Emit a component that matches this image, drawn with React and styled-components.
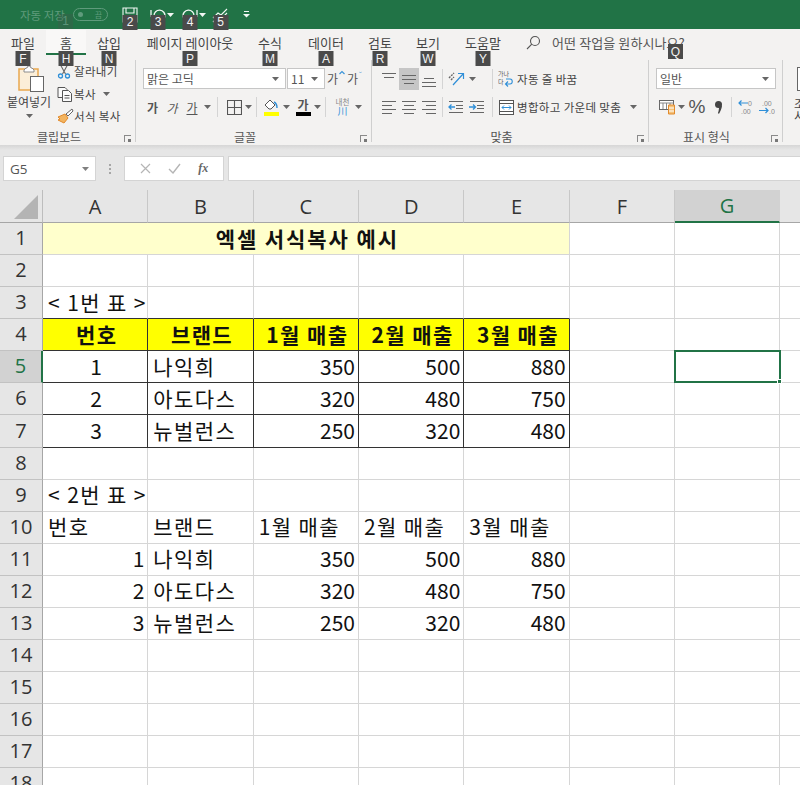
import React from "react";
import styled, { createGlobalStyle, css } from "styled-components";

const KR = `"Noto Sans CJK KR", "Noto Sans", sans-serif`;
const LAT = `"Open Sans", "Noto Sans CJK KR", sans-serif`;
const GREEN = "#217346";
const INK = "#444444";

const Global = createGlobalStyle`
  html, body { margin: 0; padding: 0; background: #fff; overflow: hidden; }
  #root { width: 800px; height: 785px; overflow: hidden; }
`;

const Page = styled.div`
  width: 800px;
  height: 785px;
  overflow: hidden;
  display: flex;
  flex-direction: column;
  font-family: ${KR};
  color: ${INK};
`;

/* ---------- key tips ---------- */
const KeyTip = styled.span`
  position: absolute;
  left: ${(p) => p.$left ?? "50%"};
  top: ${(p) => p.$top}px;
  transform: ${(p) => (p.$left ? "none" : "translateX(-50%)")};
  width: 15px;
  height: 15px;
  display: flex;
  align-items: center;
  justify-content: center;
  background: ${(p) => (p.$dim ? "rgba(70, 85, 78, 0.35)" : "#4a4a4a")};
  color: ${(p) => (p.$dim ? "#5c9479" : "#f4f4f4")};
  font: 12px "Liberation Sans", sans-serif;
  z-index: 5;
`;

/* ---------- title bar ---------- */
const TitleBar = styled.div`
  height: 29px;
  flex: none;
  background: ${GREEN};
  display: flex;
  align-items: center;
  padding-left: 20px;
`;
const AutoSave = styled.span`
  position: relative;
  width: 46px;
  color: #5f9b7c;
  font-size: 11.5px;
  white-space: nowrap;
`;
const Toggle = styled.span`
  width: 35px;
  height: 13px;
  margin-left: 7px;
  box-sizing: border-box;
  border: 1px solid #5f9b7c;
  border-radius: 7px;
  display: flex;
  align-items: center;
  justify-content: space-between;
  padding: 0 5px 0 4px;
  color: #5f9b7c;
  font-size: 8px;
  &::before {
    content: "";
    width: 5px;
    height: 5px;
    border-radius: 50%;
    background: #5f9b7c;
  }
`;
const QatButton = styled.span`
  position: relative;
  display: flex;
  align-items: center;
  justify-content: center;
  width: ${(p) => p.$w}px;
  margin-left: ${(p) => p.$ml || 0}px;
  height: 18px;
`;

/* ---------- tabs ---------- */
const Tabs = styled.div`
  height: 31px;
  flex: none;
  background: #f3f2f1;
  display: flex;
`;
const Tab = styled.div`
  position: relative;
  width: ${(p) => p.$w}px;
  flex: none;
  height: 25px;
  margin-top: 1px;
  padding-top: 3px;
  box-sizing: border-box;
  text-align: center;
  font-size: 13px;
  line-height: 19px;
  white-space: nowrap;
  color: ${INK};
  ${(p) =>
    p.$active &&
    css`
      background: #f9f8f7;
      border-bottom: 2px solid ${GREEN};
    `}
`;
const Search = styled.div`
  position: relative;
  display: flex;
  align-items: center;
  height: 25px;
  margin-top: 1px;
  padding-left: 16px;
  gap: 11px;
  font-size: 13px;
  letter-spacing: 0.1px;
  color: #555;
  white-space: nowrap;
`;

/* ---------- ribbon ---------- */
const Ribbon = styled.div`
  height: 85px;
  flex: none;
  background: #f3f2f1;
  display: flex;
  overflow: hidden;
`;
const Group = styled.section`
  position: relative;
  flex: none;
  width: ${(p) => p.$w}px;
  height: 82px;
  box-sizing: border-box;
  border-right: 1px solid #cfcfcf;
  display: flex;
  flex-direction: column;
`;
const GroupBody = styled.div`
  flex: 1;
  display: flex;
  min-height: 0;
`;
const Stack = styled.div`
  display: flex;
  flex-direction: column;
  padding: ${(p) => p.$pad || "8px 0 0 7px"};
  gap: ${(p) => p.$gap ?? 7}px;
`;
const GroupLabel = styled.div`
  height: 14px;
  flex: none;
  text-align: center;
  font-size: 12px;
  line-height: 18px;
  color: #555;
  padding-right: ${(p) => p.$pr || 0}px;
`;
const Launcher = styled.span`
  position: absolute;
  right: 4px;
  bottom: 0;
  width: 7px;
  height: 7px;
  border-left: 1px solid #8a8a8a;
  border-top: 1px solid #8a8a8a;
  box-sizing: border-box;
  &::after {
    content: "";
    position: absolute;
    right: 0;
    bottom: 0;
    width: 3px;
    height: 3px;
    background: #777;
  }
`;
const PasteButton = styled.div`
  position: relative;
  width: 58px;
  flex: none;
  display: flex;
  flex-direction: column;
  align-items: center;
  padding-top: 6px;
  font-size: 12px;
  color: ${INK};
  box-sizing: border-box;
  span {
    line-height: 16px;
    margin-top: 1px;
  }
  svg:first-child {
    margin-left: 5px;
  }
  svg:last-child {
    margin-top: 4px;
  }
`;
const SmallList = styled.div`
  display: flex;
  flex-direction: column;
`;
const SmallBtn = styled.div`
  height: 22.5px;
  flex: none;
  display: flex;
  align-items: center;
  font-size: 11.5px;
  letter-spacing: 0.35px;
  white-space: nowrap;
  color: ${INK};
  margin-left: -1px;
`;
const SmallIcon = styled.span`
  width: 17px;
  flex: none;
  display: flex;
  align-items: center;
  justify-content: flex-start;
`;
const Row = styled.div`
  display: flex;
  align-items: center;
  height: ${(p) => p.$h || 22}px;
`;
const Combo = styled.div`
  width: ${(p) => p.$w}px;
  height: 21px;
  box-sizing: border-box;
  flex: none;
  margin-right: ${(p) => p.$mr || 0}px;
  background: #fff;
  border: 1px solid #c6c6c6;
  display: flex;
  align-items: center;
  justify-content: space-between;
  padding: 0 6px 0 3px;
  font-size: 12px;
  color: #555;
`;
const Tool = styled.span`
  width: ${(p) => p.$w}px;
  flex: none;
  height: 22px;
  display: flex;
  flex-direction: column;
  align-items: center;
  justify-content: center;
  font-size: 12px;
  color: #555;
  white-space: nowrap;
  background: ${(p) => (p.$on ? "#c6c6c6" : "transparent")};
  font-weight: ${(p) => (p.$bold ? 700 : 400)};
  font-style: ${(p) => (p.$italic ? "italic" : "normal")};
  text-decoration: ${(p) => (p.$under ? "underline" : "none")};
`;
const GrowTool = styled.span`
  width: ${(p) => p.$w}px;
  flex: none;
  display: flex;
  align-items: flex-start;
  justify-content: center;
  gap: 1px;
  font-size: 12px;
  color: #555;
`;
const Sep = styled.span`
  width: 1px;
  height: 20px;
  flex: none;
  background: #d4d4d4;
  margin-left: ${(p) => p.$ml ?? p.$m ?? 5}px;
  margin-right: ${(p) => p.$mr ?? p.$m ?? 5}px;
`;
const ColorBar = styled.span`
  width: 15px;
  height: 4px;
  margin-top: 1px;
  background: ${(p) => p.$c};
`;
const ColorGlyph = styled.span`
  line-height: 13px;
`;
const TinyText = styled.span`
  font-size: 7.5px;
  line-height: 8px;
  color: #888;
`;
const TinyBlue = styled.span`
  font-size: 10px;
  line-height: 10px;
  color: #3b94d9;
`;
const BtnText = styled.span`
  font-size: 11.5px;
  letter-spacing: 0.35px;
  white-space: nowrap;
  color: ${INK};
  margin-left: ${(p) => p.$ml || 0}px;
`;
const Percent = styled.span`
  font: 19px "Liberation Sans", sans-serif;
  color: #555;
`;
const CutLabel = styled.div`
  font-size: 12px;
  line-height: 12px;
  white-space: nowrap;
  color: ${INK};
`;
const CutIcon = styled.div`
  width: 18px;
  height: 24px;
  margin: 0 0 7px 3px;
  box-sizing: border-box;
  border: 1px solid #666;
  background: #fff;
`;

/* ---------- formula bar ---------- */
const FormulaBar = styled.div`
  height: 45px;
  flex: none;
  box-sizing: border-box;
  padding: 11px 0 9px 3px;
  background: linear-gradient(#d6d6d6, #e6e6e6 5px);
  display: flex;
  align-items: stretch;
`;
const NameBox = styled.div`
  width: 93px;
  flex: none;
  box-sizing: border-box;
  background: #fff;
  border: 1px solid #d4d4d4;
  display: flex;
  align-items: center;
  justify-content: space-between;
  padding: 0 6px;
  font: 13.5px ${LAT};
  color: #555;
`;
const Dots = styled.div`
  width: 28px;
  flex: none;
  display: flex;
  flex-direction: column;
  align-items: center;
  justify-content: center;
  gap: 2px;
  i {
    width: 2px;
    height: 2px;
    background: #a6a6a6;
  }
`;
const FxBox = styled.div`
  width: 100px;
  flex: none;
  box-sizing: border-box;
  background: #fff;
  border: 1px solid #d4d4d4;
  display: flex;
  align-items: center;
  justify-content: space-around;
  padding: 0 6px;
`;
const FxText = styled.span`
  font: italic 700 12px "Liberation Serif", serif;
  color: #666;
`;
const FormulaInput = styled.div`
  flex: 1;
  margin-left: 4px;
  background: #fff;
  border: 1px solid #d4d4d4;
  border-right: 0;
`;

/* ---------- sheet ---------- */
const Sheet = styled.div`
  flex: 1;
  min-height: 0;
  overflow: hidden;
  display: grid;
  grid-template-columns: 43px repeat(8, 105.33px);
  grid-template-rows: 33px;
  grid-auto-rows: 32.08px;
  background: #fff;
`;
const Corner = styled.div`
  background: #e6e6e6;
  border-right: 1px solid #bdbdbd;
  border-bottom: 1px solid #a6a6a6;
  box-sizing: border-box;
  display: flex;
  align-items: flex-end;
  justify-content: flex-end;
  padding: 0 4px 3px 0;
`;
const ColHead = styled.div`
  box-sizing: border-box;
  display: flex;
  align-items: center;
  justify-content: center;
  background: ${(p) => (p.$sel ? "#d2d2d2" : "#e6e6e6")};
  border-right: 1px solid ${(p) => (p.$sel ? "#d2d2d2" : "#c8c8c8")};
  border-bottom: ${(p) => (p.$sel ? `2px solid ${GREEN}` : "1px solid #a6a6a6")};
  color: ${(p) => (p.$sel ? GREEN : "#333")};
  font: 20px ${LAT};
`;
const RowHead = styled.div`
  box-sizing: border-box;
  display: flex;
  align-items: center;
  justify-content: center;
  padding-bottom: 2px;
  background: ${(p) => (p.$sel ? "#d2d2d2" : "#e6e6e6")};
  border-right: ${(p) => (p.$sel ? `2px solid ${GREEN}` : "1px solid #a6a6a6")};
  border-bottom: 1px solid #c2c2c2;
  color: ${(p) => (p.$sel ? GREEN : "#333")};
  font: 20px ${LAT};
`;
const Cell = styled.div`
  position: relative;
  box-sizing: border-box;
  grid-column: span ${(p) => p.$span || 1};
  display: flex;
  align-items: center;
  justify-content: ${(p) =>
    p.$align === "right" ? "flex-end" : p.$align === "center" ? "center" : "flex-start"};
  padding: 0 ${(p) => (p.$num ? 3 : 2)}px 2px 5px;
  background: ${(p) => p.$bg || "#fff"};
  border-right: 1px solid ${(p) => (p.$darkR ? "#333" : "#d6d6d6")};
  border-bottom: 1px solid ${(p) => (p.$darkB ? "#333" : "#d6d6d6")};
  color: #111;
  font-family: ${KR};
  font-size: 21px;
  font-weight: ${(p) => (p.$bold ? 700 : 400)};
  letter-spacing: ${(p) => (p.$num ? "0" : p.$title ? "1.9px" : "1.4px")};
  white-space: nowrap;
`;
const Selection = styled.div`
  position: absolute;
  z-index: 3;
  inset: -1px -2px -1px -1px;
  border: 2px solid ${GREEN};
  &::after {
    content: "";
    position: absolute;
    right: -3px;
    bottom: -3px;
    width: 5px;
    height: 5px;
    background: ${GREEN};
    border: 1px solid #fff;
    box-sizing: border-box;
  }
`;

/* ---------- icons ---------- */
const Caret = ({ c = "#666" }) => (
  <svg width="7" height="4" viewBox="0 0 7 4"><path d="M0 0h7L3.5 4z" fill={c} /></svg>
);
const W = "#f2f7f4";
const SaveIcon = () => (
  <svg width="16" height="16" viewBox="0 0 16 16" fill="none" stroke={W} strokeWidth="1.1">
    <path d="M1 1h14v14H1zM4 1v5h8V1" />
  </svg>
);
const UndoIcon = () => (
  <svg width="16" height="16" viewBox="0 0 16 16" fill="none" stroke={W} strokeWidth="1.3">
    <path d="M4 9A5.5 5.5 0 1 1 8 14M1 3v6h6" />
  </svg>
);
const RedoIcon = () => (
  <svg width="16" height="16" viewBox="0 0 16 16" fill="none" stroke={W} strokeWidth="1.3">
    <path d="M12 9A5.5 5.5 0 1 0 8 14M15 3v6H9" />
  </svg>
);
const SparkIcon = () => (
  <svg width="17" height="16" viewBox="0 0 17 16" fill="none" stroke={W} strokeWidth="1.1">
    <path d="M1 11l5-5 3 2 6-6M1 15l5-5 3 2 6-6" />
  </svg>
);
const QatMore = () => (
  <svg width="7" height="7" viewBox="0 0 7 7"><path d="M1 .5h5" stroke={W} /><path d="M0 3h7L3.5 6.500z" fill={W} /></svg>
);
const SearchIcon = () => (
  <svg width="15" height="15" viewBox="0 0 15 15" fill="none" stroke="#555" strokeWidth="1.1">
    <circle cx="9" cy="6" r="4.5" /><path d="M5.800 9.200L1 14" />
  </svg>
);
const PasteIcon = () => (
  <svg width="27" height="27" viewBox="0 0 27 27">
    <rect x="1" y="3" width="19" height="21" fill="#fbeed8" stroke="#e9a84f" strokeWidth="1.5" />
    <path d="M6 4l2-2h1l1-2h2l1 2h1l2 2v2H6z" fill="#fff" stroke="#8c8c8c" />
    <rect x="12.500" y="10.500" width="13" height="15" fill="#fff" stroke="#666" />
  </svg>
);
const ScissorsIcon = () => (
  <svg width="14" height="16" viewBox="0 0 14 16" fill="none">
    <path d="M3 1l5.500 10M11 1L5.500 11" stroke="#666" strokeWidth="1.1" />
    <circle cx="3.500" cy="13" r="2" stroke="#2f8fd8" strokeWidth="1.3" />
    <circle cx="10.500" cy="13" r="2" stroke="#2f8fd8" strokeWidth="1.3" />
  </svg>
);
const CopyIcon = () => (
  <svg width="16" height="16" viewBox="0 0 16 16" fill="#fbfbfb" stroke="#555">
    <path d="M1 1.500h7l2 2v8H1z" />
    <path d="M5.500 4.500h6l3 3v8h-9z" />
    <path d="M7.500 9.500h5M7.500 12h5" />
  </svg>
);
const BrushIcon = () => (
  <svg width="17" height="16" viewBox="0 0 17 16">
    <path d="M1 9l7-3 3 4-4 5-6-3 2-1z" fill="#f3b45f" stroke="#e28a2b" />
    <path d="M9 6l6-5 1 2-5 5z" fill="#fff" stroke="#666" />
  </svg>
);
const BorderIcon = () => (
  <svg width="15" height="15" viewBox="0 0 15 15" fill="none" stroke="#555" strokeWidth="1.1">
    <path d="M.5.5h14v14H.5zM7.500.5v14M.5 7.500h14" />
  </svg>
);
const FillIcon = () => (
  <svg width="16" height="12" viewBox="0 0 16 12" fill="none">
    <path d="M2 6l5-5 5 5-4 4H6z" fill="#fff" stroke="#555" />
    <path d="M11 3c2 1 3 3 3 6" stroke="#2f8fd8" strokeWidth="1.4" />
  </svg>
);
const GrowArrow = ({ down }) => (
  <svg width="6" height="5" viewBox="0 0 6 5" fill="none" stroke="#3b94d9" strokeWidth="1.2">
    <path d={down ? "M.5 1L3 3.500 5.500 1" : "M.5 4L3 1.500 5.500 4"} />
  </svg>
);
const CommaIcon = () => (
  <svg width="9" height="13" viewBox="0 0 9 13">
    <circle cx="4.500" cy="3.500" r="3.500" fill="#444" />
    <path d="M5 4c3 0 3 2-.5 8.500C6 8 6 6 5 4z" fill="#444" stroke="#444" strokeWidth="1.200" />
  </svg>
);
const Lines = ({ rows }) => (
  <svg width="16" height="16" viewBox="0 0 16 16" stroke="#666" strokeWidth="1">
    {rows.map(([a, b, y]) => (
      <path key={y} d={`M${a} ${y + 0.5}H${b}`} />
    ))}
  </svg>
);
const OrientIcon = () => (
  <svg width="17" height="15" viewBox="0 0 17 15" fill="none">
    <path d="M1 7l5-5M3 9l3-3" stroke="#666" strokeWidth="1.4" strokeDasharray="2 1" />
    <path d="M5 14L15 3M10 2.500h5.500V8" stroke="#2f8fd8" strokeWidth="1.2" />
  </svg>
);
const IndentIcon = ({ flip }) => (
  <svg width="16" height="14" viewBox="0 0 16 14" fill="none">
    <path d="M1 1.500h14M8 5.500h7M8 8.500h7M1 12.500h14" stroke="#666" />
    <path d={flip ? "M0 7h6M4 4.500L6.500 7 4 9.500" : "M1 7h6M3.500 4.500L1 7l2.500 2.500"} stroke="#2f8fd8" strokeWidth="1.3" />
  </svg>
);
const WrapIcon = () => (
  <svg width="16" height="17" viewBox="0 0 16 17" fill="none">
    <text x="0" y="6" fontSize="6" fill="#555" fontFamily={KR}>가나</text>
    <text x="0" y="14" fontSize="6" fill="#555" fontFamily={KR}>다</text>
    <path d="M8 14h4c3 0 3-5 0-5H8M10 11.500L7.500 14l2.500 2.500" stroke="#2f8fd8" strokeWidth="1.1" />
  </svg>
);
const MergeIcon = () => (
  <svg width="15" height="15" viewBox="0 0 15 15" fill="none">
    <rect x=".5" y=".5" width="14" height="14" fill="#fff" stroke="#555" />
    <path d="M.5 3.500h14M.5 11.500h14" stroke="#555" />
    <path d="M3 7.500h9M5 5.500l-2 2 2 2M10 5.500l2 2-2 2" stroke="#2f8fd8" />
  </svg>
);
const AccountIcon = () => (
  <svg width="17" height="16" viewBox="0 0 17 16" fill="none">
    <rect x=".5" y="1.500" width="14" height="9" fill="#fff" stroke="#666" />
    <path d="M.5 4h14M4 4v6M7.500 4v6M11 4v6" stroke="#888" />
    <path d="M9.500 6h6v9h-6z" fill="#f4c27a" stroke="#e28a2b" />
    <path d="M10 9h5M10 12h5" stroke="#fff" />
  </svg>
);
const DecimalIcon = ({ more }) => (
  <svg width="16" height="17" viewBox="0 0 16 17" fill="none">
    {more ? (
      <>
        <text x="3" y="6.500" fontSize="7" fill="#888" fontFamily="Liberation Sans">.00</text>
        <text x="10" y="15" fontSize="7" fill="#888" fontFamily="Liberation Sans">.0</text>
        <path d="M0 11.500h9M6.500 9L9 11.500 6.500 14" stroke="#2f8fd8" strokeWidth="1.2" />
      </>
    ) : (
      <>
        <text x="10" y="6.500" fontSize="7" fill="#888" fontFamily="Liberation Sans">0</text>
        <text x="3" y="15" fontSize="7" fill="#888" fontFamily="Liberation Sans">.00</text>
        <path d="M1 4h9M3.500 1.500L1 4l2.500 2.500" stroke="#2f8fd8" strokeWidth="1.2" />
      </>
    )}
  </svg>
);
const CrossIcon = () => (
  <svg width="11" height="11" viewBox="0 0 11 11" stroke="#b5b5b5" strokeWidth="1.2"><path d="M1 1l9 9M10 1l-9 9" /></svg>
);
const CheckIcon = () => (
  <svg width="13" height="11" viewBox="0 0 13 11" fill="none" stroke="#b5b5b5" strokeWidth="1.4"><path d="M1 6l4 4 7-9" /></svg>
);
const Triangle = () => (
  <svg width="24" height="24" viewBox="0 0 24 24"><path d="M0 24L24 0v24z" fill="#b4b4b4" /></svg>
);

/* ---------- data ---------- */
const TABS = [
  ["파일", 46, "F"], ["홈", 40, "H", true], ["삽입", 46, "N"], ["페이지 레이아웃", 116, "P"],
  ["수식", 44, "M"], ["데이터", 68, "A"], ["검토", 40, "R"], ["보기", 56, "W"], ["도움말", 54, "Y"],
];
const COLS = ["A", "B", "C", "D", "E", "F", "G", "H"];
const ROWS = {
  3: [{ t: "< 1번 표 >" }],
  4: ["번호", "브랜드", "1월 매출", "2월 매출", "3월 매출"].map((t) => ({ t, a: "center", b: true, bg: "#ffff00" })),
  5: [{ t: "1", a: "center", n: 1 }, { t: "나익희" }, { t: "350", a: "right", n: 1 }, { t: "500", a: "right", n: 1 }, { t: "880", a: "right", n: 1 }],
  6: [{ t: "2", a: "center", n: 1 }, { t: "아도다스" }, { t: "320", a: "right", n: 1 }, { t: "480", a: "right", n: 1 }, { t: "750", a: "right", n: 1 }],
  7: [{ t: "3", a: "center", n: 1 }, { t: "뉴벌런스" }, { t: "250", a: "right", n: 1 }, { t: "320", a: "right", n: 1 }, { t: "480", a: "right", n: 1 }],
  9: [{ t: "< 2번 표 >" }],
  10: [{ t: "번호" }, { t: "브랜드" }, { t: "1월 매출" }, { t: "2월 매출" }, { t: "3월 매출" }],
  11: [{ t: "1", a: "right", n: 1 }, { t: "나익희" }, { t: "350", a: "right", n: 1 }, { t: "500", a: "right", n: 1 }, { t: "880", a: "right", n: 1 }],
  12: [{ t: "2", a: "right", n: 1 }, { t: "아도다스" }, { t: "320", a: "right", n: 1 }, { t: "480", a: "right", n: 1 }, { t: "750", a: "right", n: 1 }],
  13: [{ t: "3", a: "right", n: 1 }, { t: "뉴벌런스" }, { t: "250", a: "right", n: 1 }, { t: "320", a: "right", n: 1 }, { t: "480", a: "right", n: 1 }],
};
const inBox = (r, c) => r >= 4 && r <= 7 && c <= 4;

const SheetRows = () => {
  const out = [];
  for (let r = 1; r <= 18; r++) {
    out.push(<RowHead key={`h${r}`} $sel={r === 5}>{r}</RowHead>);
    if (r === 1) {
      out.push(<Cell key="title" $span={5} $align="center" $bold $title $bg="#ffffcc">엑셀 서식복사 예시</Cell>);
      COLS.slice(5).forEach((c) => out.push(<Cell key={`1${c}`} />));
      continue;
    }
    COLS.forEach((col, c) => {
      const d = (ROWS[r] && ROWS[r][c]) || {};
      out.push(
        <Cell
          key={`${r}${col}`}
          $align={d.a}
          $bold={d.b}
          $bg={d.bg}
          $num={d.n}
          $darkR={inBox(r, c) || inBox(r, c + 1)}
          $darkB={inBox(r, c) || inBox(r + 1, c)}
        >
          {d.t}
          {r === 5 && col === "G" && <Selection />}
        </Cell>
      );
    });
  }
  return out;
};

export default function App() {
  return (
    <Page>
      <Global />
      <TitleBar>
        <AutoSave>
          자동 저장
          <KeyTip $dim $left="38px" $top={7}>1</KeyTip>
        </AutoSave>
        <Toggle>끔</Toggle>
        <QatButton $w={16} $ml={14}><SaveIcon /><KeyTip $top={9}>2</KeyTip></QatButton>
        <QatButton $w={16} $ml={12}><UndoIcon /><KeyTip $top={9}>3</KeyTip></QatButton>
        <QatButton $w={7} $ml={1}><Caret c={W} /></QatButton>
        <QatButton $w={16} $ml={8}><RedoIcon /><KeyTip $top={9}>4</KeyTip></QatButton>
        <QatButton $w={7} $ml={1}><Caret c={W} /></QatButton>
        <QatButton $w={17} $ml={6}><SparkIcon /><KeyTip $top={9}>5</KeyTip></QatButton>
        <QatButton $w={7} $ml={14}><QatMore /></QatButton>
      </TitleBar>

      <Tabs>
        {TABS.map(([t, w, k, on]) => (
          <Tab key={t} $w={w} $active={on}>
            {t}
            <KeyTip $top={21}>{k}</KeyTip>
          </Tab>
        ))}
        <Search>
          <SearchIcon />
          어떤 작업을 원하시나요?
          <KeyTip $left="158px" $top={14}>Q</KeyTip>
        </Search>
      </Tabs>

      <Ribbon>
        <Group $w={136}>
          <GroupBody>
            <PasteButton>
              <PasteIcon />
              <span>붙여넣기</span>
              <Caret />
            </PasteButton>
            <SmallList>
              <SmallBtn><SmallIcon><ScissorsIcon /></SmallIcon>잘라내기</SmallBtn>
              <SmallBtn><SmallIcon><CopyIcon /></SmallIcon>복사<Tool $w={22}><Caret /></Tool></SmallBtn>
              <SmallBtn><SmallIcon><BrushIcon /></SmallIcon>서식 복사</SmallBtn>
            </SmallList>
          </GroupBody>
          <GroupLabel $pr={17}>클립보드</GroupLabel>
          <Launcher />
        </Group>

        <Group $w={236}>
          <GroupBody>
            <Stack>
              <Row $h={21}>
                <Combo $w={143} $mr={1}>맑은 고딕<Caret /></Combo>
                <Combo $w={38}>11<Caret /></Combo>
                <GrowTool $w={22}>가<GrowArrow /></GrowTool>
                <GrowTool $w={15}>가<GrowArrow down /></GrowTool>
              </Row>
              <Row>
                <Tool $w={19} $bold>가</Tool>
                <Tool $w={20} $italic>가</Tool>
                <Tool $w={20} $under>가</Tool>
                <Tool $w={10}><Caret /></Tool>
                <Sep />
                <Tool $w={22}><BorderIcon /></Tool>
                <Tool $w={7}><Caret /></Tool>
                <Sep $m={4} />
                <Tool $w={20}><FillIcon /><ColorBar $c="#ffff00" /></Tool>
                <Tool $w={10}><Caret /></Tool>
                <Tool $w={24} $bold>
                  <ColorGlyph>가</ColorGlyph>
                  <ColorBar $c="#000" />
                </Tool>
                <Tool $w={4}><Caret /></Tool>
                <Sep $m={6} />
                <Tool $w={21}>
                  <TinyText>내천</TinyText>
                  <TinyBlue>川</TinyBlue>
                </Tool>
                <Tool $w={10}><Caret /></Tool>
              </Row>
            </Stack>
          </GroupBody>
          <GroupLabel $pr={17}>글꼴</GroupLabel>
          <Launcher />
        </Group>

        <Group $w={277}>
          <GroupBody>
            <Stack>
              <Row $h={21}>
                <Tool $w={20}><Lines rows={[[1, 15, 2], [3, 13, 6]]} /></Tool>
                <Tool $w={20} $on><Lines rows={[[1, 15, 4], [1, 15, 8], [3, 13, 12]]} /></Tool>
                <Tool $w={20}><Lines rows={[[3, 13, 7], [1, 15, 11], [1, 15, 15]]} /></Tool>
                <Sep $m={3} />
                <Tool $w={20}><OrientIcon /></Tool>
                <Tool $w={12}><Caret /></Tool>
                <Sep $ml={14} $mr={4} />
                <Tool $w={18}><WrapIcon /></Tool>
                <BtnText $ml={2}>자동 줄 바꿈</BtnText>
              </Row>
              <Row>
                <Tool $w={20}><Lines rows={[[1, 15, 2], [1, 11, 6], [1, 15, 10], [1, 11, 14]]} /></Tool>
                <Tool $w={20}><Lines rows={[[1, 15, 2], [3, 13, 6], [1, 15, 10], [3, 13, 14]]} /></Tool>
                <Tool $w={20}><Lines rows={[[1, 15, 2], [5, 15, 6], [1, 15, 10], [5, 15, 14]]} /></Tool>
                <Sep $m={3} />
                <Tool $w={20}><IndentIcon /></Tool>
                <Tool $w={22}><IndentIcon flip /></Tool>
                <Sep $m={4} />
                <Tool $w={18}><MergeIcon /></Tool>
                <BtnText $ml={2}>병합하고 가운데 맞춤</BtnText>
                <Tool $w={24}><Caret /></Tool>
              </Row>
            </Stack>
          </GroupBody>
          <GroupLabel $pr={17}>맞춤</GroupLabel>
          <Launcher />
        </Group>

        <Group $w={134}>
          <GroupBody>
            <Stack>
              <Row $h={21}>
                <Combo $w={120}>일반<Caret /></Combo>
              </Row>
              <Row>
                <Tool $w={22}><AccountIcon /></Tool>
                <Tool $w={6}><Caret /></Tool>
                <Tool $w={26}><Percent>%</Percent></Tool>
                <Tool $w={17}><CommaIcon /></Tool>
                <Sep $m={4} />
                <Tool $w={20}><DecimalIcon /></Tool>
                <Tool $w={22}><DecimalIcon more /></Tool>
              </Row>
            </Stack>
          </GroupBody>
          <GroupLabel $pr={18}>표시 형식</GroupLabel>
          <Launcher />
        </Group>

        <Stack $pad="7px 0 0 11px" $gap={0}>
          <CutIcon />
          <CutLabel>조건부</CutLabel>
          <CutLabel>서식</CutLabel>
        </Stack>
      </Ribbon>

      <FormulaBar>
        <NameBox>G5<Caret c="#808080" /></NameBox>
        <Dots><i /><i /><i /></Dots>
        <FxBox><CrossIcon /><CheckIcon /><FxText>fx</FxText></FxBox>
        <FormulaInput />
      </FormulaBar>

      <Sheet>
        <Corner><Triangle /></Corner>
        {COLS.map((c) => (
          <ColHead key={c} $sel={c === "G"}>{c}</ColHead>
        ))}
        <SheetRows />
      </Sheet>
    </Page>
  );
}
